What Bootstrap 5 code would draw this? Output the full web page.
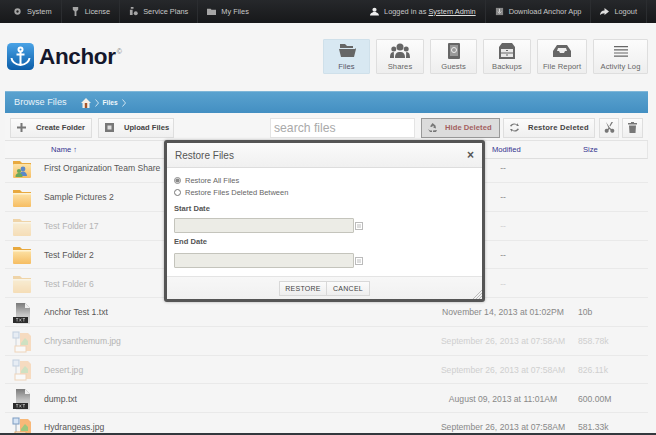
<!doctype html>
<html lang="en">
<head>
<meta charset="utf-8">
<title>Anchor - Browse Files</title>
<link href="https://cdn.jsdelivr.net/npm/bootstrap@5.3.0/dist/css/bootstrap.min.css" rel="stylesheet">
<style>
html,body{height:435px;overflow:hidden}
body{background:#f5f5f5;font-family:"Liberation Sans",Arial,sans-serif;font-size:9px;color:#555;position:relative}
.shell{height:435px}
.topbar{height:23px;background:linear-gradient(#26282b,#17181a);color:#c8c8c8;font-size:7.4px;flex:none}
.topitem{padding:0 9px;border-right:1px solid #2b2d30;gap:5px;color:#c8c8c8;text-decoration:none;white-space:nowrap}
.topitem u{color:#ddd}
.topitem svg{width:9px;height:9px;fill:#a5a5a5;flex:none}
.topitem.lead-item{padding-left:13px}
.topend{width:9px}
.page{padding:0 8px 0 5px;min-height:0}
.headrow{height:68px;flex:none}
.brand{margin:20px 0 0 2px;gap:5px;align-items:center}
.brandname{font-size:22.5px;font-weight:700;color:#14172b;letter-spacing:-.35px;line-height:26px;position:relative}
.brandname sup{font-size:7px;font-weight:400;color:#777;top:-10px;letter-spacing:0;margin-left:1px}
.tiles{gap:6px;margin:16px 0 0 auto}
.tile{height:35px;border:1px solid #dedede;background:linear-gradient(#fcfcfc,#eeeeee);color:#666;font-size:7.6px;letter-spacing:.1px;line-height:1;text-decoration:none;display:flex;flex-direction:column;align-items:center;justify-content:flex-end;padding:0 0 2px;border-radius:1px}
.tile svg{width:20px;height:16px;fill:#666;margin-bottom:4px}
.tile.on{background:#d8e8f2;border-color:#cfe0ea;color:#556}
.bluebar{height:22px;flex:none;background:linear-gradient(#5aa2cf,#438fc2);border-top:1px solid #7fb6d8;color:#e9f3f9;font-size:9.2px;padding-left:9px;gap:14px}
.crumbs{gap:4px;font-size:6.6px;font-weight:700;color:#f2f7fb}
.crumbs polyline{fill:none;stroke:#cfe3f0;stroke-width:1}
.tools{height:28px;flex:none;padding:5px 5px 3px 5px;gap:6px;border-bottom:1px solid #e3e3e3;background:#f6f6f6}
.tbtn{height:20px;flex:none;border:1px solid #dedede;background:linear-gradient(#fbfbfb,#f0f0f0);color:#444;font-size:7.6px;font-weight:700;padding:0 0 0 5px;gap:9px;white-space:nowrap;border-radius:0;line-height:1}
.tbtn svg{width:11px;height:11px;fill:#777;flex:none}
.tb-create{width:82px}
.tb-upload{width:76px}
.tb-hide{width:79px;background:#dcdcdc;border-color:#999;color:#a36060;margin-right:-3px;letter-spacing:.05px;gap:7px}
.tb-restore{width:92px;letter-spacing:.2px;gap:8px;margin-right:-2px}
.tb-cut{width:20px;margin-right:-3px}
.tb-trash{width:21px}
.tbtn.square{justify-content:center;padding:0}
.seek{width:145px;height:20px;flex:none;margin-left:90px;border:1px solid #e4e4e4;background:#fff;font-size:12.2px;color:#aaa;padding:0 3px;border-radius:0;line-height:18px}
.heads{height:18px;flex:none;border-bottom:1px solid #dedede;border-right:1px solid #e6e6e6;font-size:7.6px;color:#33338f;background:#f6f6f6}
.hname{width:487px;padding-left:46px;flex:none}
.hmod{width:91px;flex:none}
.filerow{height:28.75px;flex:none;padding-top:2px;border-bottom:1px solid #e9e9e9;font-size:8.6px;color:#555}
.filerow.first{height:24px;padding-top:1px;padding-bottom:5px}
.filerow.gone{color:#b4b4b4}
.filerow.gone .mod,.filerow.gone .sz{color:#cfcfcf}
.filerow.gone svg{opacity:.42}
.ic{width:39px;padding-left:7px;flex:none;display:flex}
.ic svg{width:20px;height:22px}
.nm{width:396px;flex:none;white-space:nowrap}
.mod{width:126px;flex:none;text-align:center;color:#888;white-space:nowrap}
.sz{padding-left:12px;color:#888}
.baseline{height:2px;flex:none;background:#33383d}
.dialog{position:absolute;left:164px;top:140px;width:321px;height:162px;border:3px solid #555;border-radius:3px;background:#fff;box-shadow:0 0 3px rgba(0,0,0,.3);display:flex;flex-direction:column;overflow:hidden}
.dhead{height:25px;flex:none;background:linear-gradient(#fbfbfb,#f0f0f0);border-bottom:1px solid #ddd;padding:0 8px 0 8px;font-size:10px;color:#555}
.dhead b{font-size:12px;color:#555;line-height:1}
.dbody{flex:1;padding:6px 9px 0 7px;font-size:7.5px;color:#666}
.pick{gap:4px;height:12.5px}
.pick input{width:7px;height:7px;margin:0;accent-color:#888}
.dlabel{font-size:7.6px;font-weight:700;color:#555;line-height:12px}
.dl-start{margin:4px 0 3px}
.dl-end{margin:3px 0 5px}
.datebox{width:180px;height:15px;background:#ecece6;border:1px solid #c4c4bc;border-radius:1px}
.fieldline{gap:1px}
.fieldline svg{width:8px;height:8px;fill:none;stroke:#bbb}
.dfoot{height:23px;flex:none;background:linear-gradient(#f7f7f7,#f1f1f1);border-top:1px solid #e4e4e4;position:relative}
.dbtn{height:15px;width:48px;border:1px solid #d8d8d8;background:linear-gradient(#fbfbfb,#eee);font-size:7px;color:#444;letter-spacing:.25px;padding:0;border-radius:0;line-height:1}
.dbtn + .dbtn{width:44px;margin-left:-1px}
.grip{position:absolute;right:0;bottom:0;width:9px;height:9px;stroke:#bbb}
</style>
</head>
<body>
<svg width="0" height="0" class="position-absolute">
<defs>
<linearGradient id="fg" x1="0" y1="0" x2="0" y2="1"><stop offset="0" stop-color="#fde3a8"/><stop offset="1" stop-color="#f6bd62"/></linearGradient>
<linearGradient id="tg" x1="0" y1="0" x2="0" y2="1"><stop offset="0" stop-color="#7a7a7a"/><stop offset=".55" stop-color="#c4c4c4"/><stop offset="1" stop-color="#dedede"/></linearGradient>
<symbol id="folder" viewBox="0 0 20 22"><path d="M1 3h7l2 2h9v3H1z" fill="#e8a93f"/><rect x="1" y="6" width="18" height="14" rx="1" fill="url(#fg)"/><rect x="1" y="6" width="18" height="1.500" fill="#fff3d2"/></symbol>
<symbol id="share" viewBox="0 0 20 22"><path d="M1 3h7l2 2h9v3H1z" fill="#e8a93f"/><rect x="1" y="6" width="18" height="14" rx="1" fill="url(#fg)"/><circle cx="11" cy="11" r="2.400" fill="#5c88c8"/><path d="M7 18c0-3 2-4.500 4-4.500s4 1.500 4 4.500z" fill="#5c88c8"/><circle cx="7" cy="13" r="2.100" fill="#6aa85a"/><path d="M3.500 19c0-3 1.500-4 3.500-4s3.500 1 3.500 4z" fill="#6aa85a"/></symbol>
<symbol id="txt" viewBox="0 0 20 22"><path d="M4 1h9l5 5v16H4z" fill="url(#tg)"/><path d="M13 1l5 5h-5z" fill="#eee"/><rect x="1" y="15" width="15" height="6" fill="#2b2b2b"/><path d="M4 16.500h2.200M5.100 16.500v3M7.200 16.500l2.200 3M9.400 16.500l-2.200 3M10.600 16.500h2.400M11.800 16.500v3" stroke="#ddd" stroke-width=".6" fill="none"/></symbol>
<symbol id="jpg" viewBox="0 0 20 22"><path d="M8 2h8l3 3v15H8z" fill="#f8b878"/><rect x="1" y="1" width="6" height="6" fill="#d6e4f4" stroke="#7d9cc2"/><path d="M4 7v9h3" stroke="#9ab" fill="none"/><path d="M9 12l4-5 3 3v4H9z" fill="#9cc77e"/><rect x="3" y="15" width="11" height="6" fill="#fff" stroke="#e6a868"/></symbol>
</defs>
</svg>
<div class="shell d-flex flex-column">
  <nav class="topbar d-flex align-items-stretch">
    <a class="topitem lead-item d-flex align-items-center"><svg viewBox="0 0 10 10"><circle cx="5" cy="5" r="3.500"/><circle cx="5" cy="5" r="1.300" fill="#222"/></svg>System</a>
    <a class="topitem d-flex align-items-center"><svg viewBox="0 0 10 10"><path d="M2 0h6v3L6 5v5H4V5L2 3z"/></svg>License</a>
    <a class="topitem d-flex align-items-center"><svg viewBox="0 0 10 10"><path d="M1 3h3v6H1zM2 0h3v2H2z"/><circle cx="7.500" cy="7" r="2.200"/></svg>Service Plans</a>
    <a class="topitem d-flex align-items-center border-0"><svg viewBox="0 0 10 10"><path d="M0 2h4l1 1h5v6H0z"/></svg>My Files</a>
    <a class="topitem d-flex align-items-center ms-auto"><svg viewBox="0 0 10 10"><circle cx="5" cy="3" r="2.300" fill="#eee"/><path d="M0 9.500c0-3 3-3 3.500-4h3c.5 1 3.500 1 3.500 4z" fill="#eee"/></svg><span>Logged in as <u>System Admin</u></span></a>
    <a class="topitem d-flex align-items-center"><svg viewBox="0 0 10 10"><rect x="1" y="1" width="8" height="8" fill="#888"/><path d="M5 2v4M3 5l2 2 2-2" stroke="#ddd" fill="none"/></svg>Download Anchor App</a>
    <a class="topitem d-flex align-items-center"><svg viewBox="0 0 10 10"><path d="M5 1l5 4-5 4V7C3 7 1 8 0 9c0-3 2-5 5-5z" fill="#ddd"/></svg>Logout</a>
    <span class="topend"></span>
  </nav>

  <main class="page flex-grow-1 d-flex flex-column overflow-hidden">
    <header class="headrow d-flex">
      <div class="brand d-flex align-self-start">
        <svg width="27" height="27" viewBox="0 0 27 27"><defs><linearGradient id="lg" x1="0" y1="0" x2="0" y2="1"><stop offset="0" stop-color="#4aa3e6"/><stop offset="1" stop-color="#0b5da8"/></linearGradient></defs><rect width="27" height="27" rx="4.500" fill="url(#lg)"/><g fill="none" stroke="#fff" stroke-width="2"><circle cx="13.500" cy="6.500" r="2"/><path d="M13.500 8.500v13M9.500 11.500h8M4.500 15c.5 4.500 5 6.500 9 7 4-.5 8.500-2.500 9-7"/></g></svg>
        <span class="brandname">Anchor<sup>©</sup></span>
      </div>
      <div class="tiles d-flex align-self-start">
        <a class="tile on" style="width:47px"><svg viewBox="0 0 20 16"><path d="M3 1h5l2 2h6v2H3zM2 6h16v-1l1 1-2 8H4z"/></svg>Files</a>
        <a class="tile" style="width:48px"><svg viewBox="0 0 20 16"><circle cx="10" cy="4" r="3.500"/><path d="M5 15c0-5 2-6 5-6s5 1 5 6z"/><circle cx="3.800" cy="6" r="2.500"/><circle cx="16.200" cy="6" r="2.500"/><path d="M0 15c0-4 1-6 3.800-6L4 15zM20 15c0-4-1-6-3.800-6L16 15z"/></svg>Shares</a>
        <a class="tile" style="width:47px"><svg viewBox="0 0 20 16"><rect x="4" y="0" width="12" height="16" rx="1"/><rect x="6" y="2" width="8" height="11" fill="#999"/><circle cx="10" cy="7" r="2.500" fill="none" stroke="#eee"/></svg>Guests</a>
        <a class="tile" style="width:48px"><svg viewBox="0 0 20 16"><path d="M5 0h10l3 4v12H2V4z"/><path d="M4 6h12v3.500H4zM4 10.500h12V14H4z" fill="#e8e8e8"/><path d="M9 7.500h2M9 12h2" stroke="#666"/></svg>Backups</a>
        <a class="tile" style="width:50px"><svg viewBox="0 0 20 16"><path d="M5 2h10l4 6v6H1V8z"/><path d="M6 5h8l1 3h-2l-1 2H8L7 8H5z" fill="#eee"/></svg>File Report</a>
        <a class="tile" style="width:55px"><svg viewBox="0 0 20 16"><path d="M3 3h14v1.200H3zM3 6.200h14v1.200H3zM3 9.400h14v1.200H3zM3 12.600h14v1.200H3z"/></svg>Activity Log</a>
      </div>
    </header>

    <div class="bluebar d-flex align-items-center">
      <span>Browse Files</span>
      <span class="crumbs d-flex align-items-center">
        <svg width="10" height="10" viewBox="0 0 10 10"><path d="M5 0L0 5h1.500v5h7V5H10z" fill="#f4efe6"/><rect x="3.800" y="5" width="2.400" height="5" fill="#a5552a"/></svg>
        <svg width="4" height="8" viewBox="0 0 4 8"><polyline points="0.500,0.500 3.500,4 0.500,7.500"/></svg>
        <span>Files</span>
        <svg width="4" height="8" viewBox="0 0 4 8"><polyline points="0.500,0.500 3.500,4 0.500,7.500"/></svg>
      </span>
    </div>

    <div class="tools d-flex align-items-center">
      <button class="btn tbtn tb-create d-flex align-items-center"><svg viewBox="0 0 11 11"><path d="M4.500 1h2v3.500H10v2H6.500V10h-2V6.500H1v-2h3.500z"/></svg>Create Folder</button>
      <button class="btn tbtn tb-upload d-flex align-items-center"><svg viewBox="0 0 11 11"><path d="M1 1h9v9H1z"/><rect x="3.500" y="3.500" width="4" height="4" fill="#ddd"/></svg>Upload Files</button>
      <div class="seek">search files</div>
      <button class="btn tbtn tb-hide d-flex align-items-center"><svg viewBox="0 0 11 11"><path d="M5.500 1L3 4.500l2 .5 1-1.500 1 1.500-1 .5 3 1-.5-3zM1 7l2 3h2V8.500H3zM6 8.500V10h3l1-2z"/></svg>Hide Deleted</button>
      <button class="btn tbtn tb-restore d-flex align-items-center"><svg viewBox="0 0 11 11"><path d="M1 4c1-2.500 4.500-3.500 7-1.500V1l2 3H7l1-.7C6.500 2 3.500 2.500 2.500 4.500zM10 7c-1 2.500-4.500 3.500-7 1.500V10L1 7h3l-1 .7C4.500 9 7.500 8.500 8.500 6.500z"/></svg>Restore Deleted</button>
      <button class="btn tbtn tb-cut square d-flex align-items-center" aria-label="Cut"><svg viewBox="0 0 11 11"><path d="M2 0l4 6 1.500 1a2 2 0 1 1-1 1L5.500 7 4.500 8a2 2 0 1 1-1-1L4.500 6z"/><path d="M9 0L6.200 4.500 5.500 3.500 7.500 0z"/></svg></button>
      <button class="btn tbtn tb-trash square d-flex align-items-center" aria-label="Delete"><svg viewBox="0 0 11 11"><path d="M4 0h3v1h3v1.500H1V1h3zM2 3.500h7L8.500 11h-6z"/></svg></button>
    </div>

    <div class="heads d-flex align-items-center">
      <span class="hname">Name ↑</span>
      <span class="hmod">Modified</span>
      <span>Size</span>
    </div>

    <div class="filerow first d-flex align-items-center"><span class="ic"><svg><use href="#share"/></svg></span><span class="nm">First Organization Team Share</span><span class="mod">--</span><span class="sz"></span></div>
    <div class="filerow d-flex align-items-center"><span class="ic"><svg><use href="#folder"/></svg></span><span class="nm">Sample Pictures 2</span><span class="mod">--</span><span class="sz"></span></div>
    <div class="filerow gone d-flex align-items-center"><span class="ic"><svg><use href="#folder"/></svg></span><span class="nm">Test Folder 17</span><span class="mod">--</span><span class="sz"></span></div>
    <div class="filerow d-flex align-items-center"><span class="ic"><svg><use href="#folder"/></svg></span><span class="nm">Test Folder 2</span><span class="mod">--</span><span class="sz"></span></div>
    <div class="filerow gone d-flex align-items-center"><span class="ic"><svg><use href="#folder"/></svg></span><span class="nm">Test Folder 6</span><span class="mod">--</span><span class="sz"></span></div>
    <div class="filerow d-flex align-items-center"><span class="ic"><svg><use href="#txt"/></svg></span><span class="nm">Anchor Test 1.txt</span><span class="mod">November 14, 2013 at 01:02PM</span><span class="sz">10b</span></div>
    <div class="filerow gone d-flex align-items-center"><span class="ic"><svg><use href="#jpg"/></svg></span><span class="nm">Chrysanthemum.jpg</span><span class="mod">September 26, 2013 at 07:58AM</span><span class="sz">858.78k</span></div>
    <div class="filerow gone d-flex align-items-center"><span class="ic"><svg><use href="#jpg"/></svg></span><span class="nm">Desert.jpg</span><span class="mod">September 26, 2013 at 07:58AM</span><span class="sz">826.11k</span></div>
    <div class="filerow d-flex align-items-center"><span class="ic"><svg><use href="#txt"/></svg></span><span class="nm">dump.txt</span><span class="mod">August 09, 2013 at 11:01AM</span><span class="sz">600.00M</span></div>
    <div class="filerow d-flex align-items-center"><span class="ic"><svg><use href="#jpg"/></svg></span><span class="nm">Hydrangeas.jpg</span><span class="mod">September 26, 2013 at 07:58AM</span><span class="sz">581.33k</span></div>
  </main>
  <div class="baseline"></div>
</div>

<section class="dialog" role="dialog" aria-label="Restore Files">
  <div class="dhead d-flex align-items-center justify-content-between"><span>Restore Files</span><b>×</b></div>
  <div class="dbody">
    <label class="pick d-flex align-items-center"><input type="radio" name="restore" checked>Restore All Files</label>
    <label class="pick d-flex align-items-center"><input type="radio" name="restore">Restore Files Deleted Between</label>
    <div class="dlabel dl-start">Start Date</div>
    <div class="fieldline d-flex align-items-center"><div class="datebox"></div><svg viewBox="0 0 8 8"><rect x=".5" y=".5" width="7" height="7"/><path d="M2 3h4M2 5h4"/></svg></div>
    <div class="dlabel dl-end">End Date</div>
    <div class="fieldline d-flex align-items-center"><div class="datebox"></div><svg viewBox="0 0 8 8"><rect x=".5" y=".5" width="7" height="7"/><path d="M2 3h4M2 5h4"/></svg></div>
  </div>
  <div class="dfoot d-flex align-items-center justify-content-center">
    <button class="btn dbtn">RESTORE</button><button class="btn dbtn">CANCEL</button>
    <svg class="grip" viewBox="0 0 9 9"><path d="M0 9l9-9M3 9l6-6M6 9l3-3"/></svg>
  </div>
</section>
<script src="https://cdn.jsdelivr.net/npm/bootstrap@5.3.0/dist/js/bootstrap.bundle.min.js"></script>
</body>
</html>
